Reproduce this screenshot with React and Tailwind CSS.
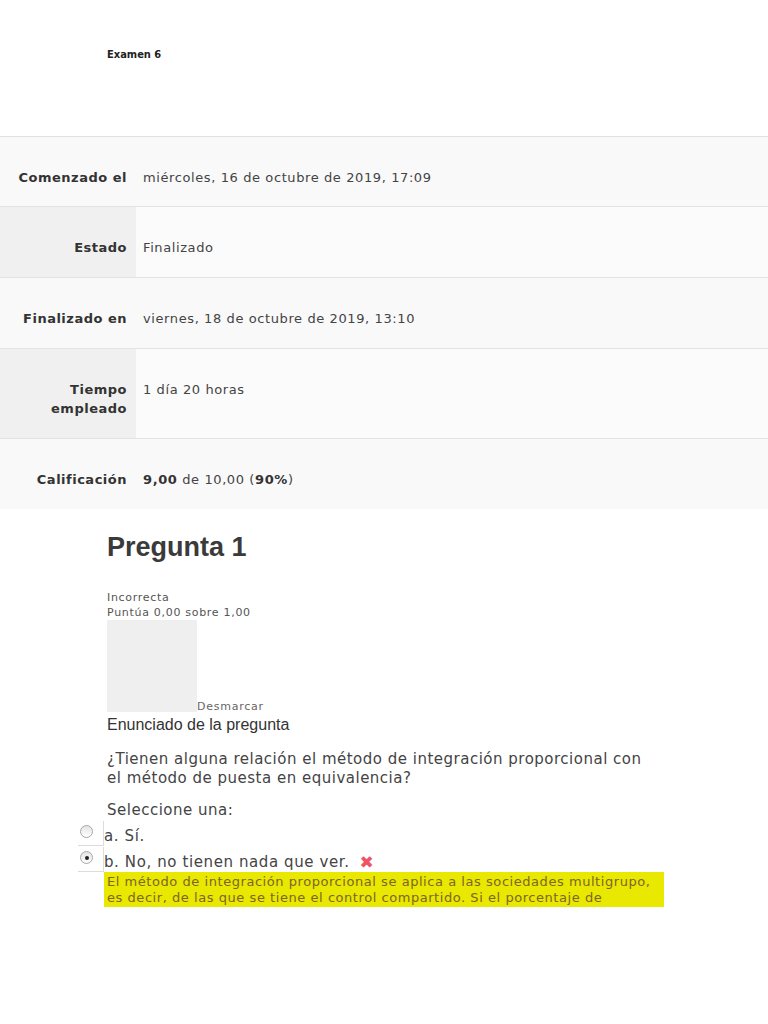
import React from 'react';

const dv = { fontFamily: '"DejaVu Sans", Verdana, sans-serif' };
const ar = { fontFamily: '"Liberation Sans", Arial, sans-serif' };

const filas = [
  { label: 'Comenzado el', value: 'miércoles, 16 de octubre de 2019, 17:09', alt: false },
  { label: 'Estado', value: 'Finalizado', alt: true },
  { label: 'Finalizado en', value: 'viernes, 18 de octubre de 2019, 13:10', alt: false },
  { label: ['Tiempo', 'empleado'], value: '1 día 20 horas', alt: true },
  { label: 'Calificación', value: null, alt: false },
];

const Radio = ({ checked }) => (
  <div className="w-[26px] h-[25px] border-r border-b border-[#dcdcdc] flex justify-center pt-[4px] pr-[8px]">
    <span className="w-[13px] h-[13px] rounded-full border border-[#a8a8a8] bg-gradient-to-b from-[#e4e4e4] to-white flex items-center justify-center">
      {checked && <span className="w-[4px] h-[4px] rounded-full bg-[#222]" />}
    </span>
  </div>
);

export default function App() {
  return (
    <div className="bg-white min-h-[1024px] text-[#333]" style={dv}>
      <div className="h-[136px] pl-[107px] pt-[47px]">
        <div className="text-[11px] font-bold text-[#222]" style={{ fontFamily: '"DejaVu Sans Condensed", "DejaVu Sans", sans-serif', fontStretch: 'condensed' }}>
          Examen 6
        </div>
      </div>

      <div className="border-t border-[#e0e0e0]">
        {filas.map((f, i) => (
          <div key={i} className={`flex ${i < filas.length - 1 ? 'border-b border-[#e3e3e3]' : ''} ${f.alt ? 'bg-[#fbfbfb]' : 'bg-[#f9f9f9]'}`}>
            <div className={`w-[136px] shrink-0 text-right pr-[9px] pt-[31px] ${i === 0 ? 'pb-[19px]' : 'pb-[20px]'} text-[13px] font-bold leading-[19px] tracking-[0.5px] text-[#333] ${f.alt ? 'bg-[#f0f0f0]' : ''}`}>
              {Array.isArray(f.label) ? f.label.map((l) => <div key={l}>{l}</div>) : f.label}
            </div>
            <div className="pl-[7px] pt-[31px] text-[13px] leading-[19px] tracking-[0.6px] text-[#444]">
              {f.value ?? (
                <span>
                  <b className="text-[#333]">9,00</b> de 10,00 (<b className="text-[#333]">90%</b>)
                </span>
              )}
            </div>
          </div>
        ))}
      </div>

      <div className="pl-[107px] pt-[21px]">
        <h3 className="text-[27px] font-bold leading-[34px] text-[#3a3a3a]" style={ar}>Pregunta 1</h3>
        <div className="mt-[26px] text-[11px] leading-[15px] tracking-[0.7px] text-[#555]">
          <div>Incorrecta</div>
          <div>Puntúa 0,00 sobre 1,00</div>
        </div>
        <div className="flex items-end">
          <div className="w-[90px] h-[92px] bg-[#efefef]" />
          <span className="text-[11px] leading-[11px] text-[#666] tracking-[0.75px]">Desmarcar</span>
        </div>
        <div className="text-[16px] leading-[20px] text-[#333] mt-[3px]" style={ar}>Enunciado de la pregunta</div>

        <div className="mt-[15px] w-[550px] text-[15px] leading-[19px] tracking-[0.5px] text-[#444]">
          ¿Tienen alguna relación el método de integración proporcional con el método de puesta en equivalencia?
        </div>
        <div className="mt-[12px] text-[15px] leading-[20px] tracking-[0.5px] text-[#444]">Seleccione una:</div>
      </div>

      <div className="pl-[78px] mt-[1px] text-[15px] tracking-[0.6px] text-[#444]">
        <div className="flex items-end">
          <Radio />
          <span className="leading-[20px]">a. Sí.</span>
        </div>
        <div className="flex items-end mt-[1px]">
          <Radio checked />
          <span className="leading-[20px]">b. No, no tienen nada que ver.</span>
          <span className="ml-[10px] text-[#ef5365] text-[17px] leading-[20px] font-bold">✖</span>
        </div>
      </div>

      <div className="ml-[104px] w-[560px] bg-[#e8e800] px-[3px] pt-[2px] pb-[1px] text-[13px] leading-[16px] tracking-[0.55px] text-[#7d6528]">
        El método de integración proporcional se aplica a las sociedades multigrupo, es decir, de las que se tiene el control compartido. Si el porcentaje de
      </div>
    </div>
  );
}
